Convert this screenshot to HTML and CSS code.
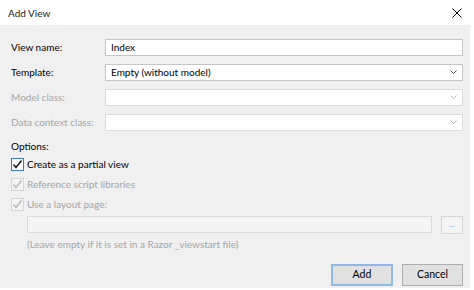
FILE: index.html
```html
<!DOCTYPE html>
<html lang="en">
<head>
  <meta charset="UTF-8" />
  <title>Add View</title>
  <link rel="stylesheet" href="styles.css">
</head>
<body>
  <div class="dialog">
    <div class="title-bar">
      <span class="title">Add View</span>
      <svg class="close-icon" width="10" height="10" viewBox="0 0 10 10">
        <path d="M0.5 0.5 L9.5 9.5 M9.5 0.5 L0.5 9.5" stroke="#000" stroke-width="1" fill="none" />
      </svg>
    </div>

    <div class="content">
      <div class="fields">
        <label class="field-label">View name:</label>
        <div class="box">Index</div>

        <label class="field-label">Template:</label>
        <div class="box select">Empty (without model)
          <svg class="arrow" width="7" height="5" viewBox="0 0 7 5"><path d="M0.5 0.5 L3.5 3.5 L6.5 0.5" stroke="#555" fill="none" /></svg>
        </div>

        <label class="field-label disabled">Model class:</label>
        <div class="box select off">
          <svg class="arrow" width="7" height="5" viewBox="0 0 7 5"><path d="M0.5 0.5 L3.5 3.5 L6.5 0.5" stroke="#b5b5b5" fill="none" /></svg>
        </div>

        <label class="field-label disabled">Data context class:</label>
        <div class="box select off">
          <svg class="arrow" width="7" height="5" viewBox="0 0 7 5"><path d="M0.5 0.5 L3.5 3.5 L6.5 0.5" stroke="#b5b5b5" fill="none" /></svg>
        </div>
      </div>

      <div class="options-label">Options:</div>

      <div class="check-row">
        <span class="checkbox checked">
          <svg width="11" height="11" viewBox="0 0 11 11"><path d="M1.5 5.5 L4 8.5 L9.5 1.5" stroke="#1e1e1e" stroke-width="1.6" fill="none" /></svg>
        </span>
        <span>Create as a partial view</span>
      </div>
      <div class="check-row disabled">
        <span class="checkbox off">
          <svg width="11" height="11" viewBox="0 0 11 11"><path d="M1.5 5.5 L4 8.5 L9.5 1.5" stroke="#bcbcbc" stroke-width="1.6" fill="none" /></svg>
        </span>
        <span>Reference script libraries</span>
      </div>
      <div class="check-row disabled">
        <span class="checkbox off">
          <svg width="11" height="11" viewBox="0 0 11 11"><path d="M1.5 5.5 L4 8.5 L9.5 1.5" stroke="#bcbcbc" stroke-width="1.6" fill="none" /></svg>
        </span>
        <span>Use a layout page:</span>
      </div>

      <div class="layout-row">
        <div class="box layout-input off"></div>
        <div class="browse-button">...</div>
      </div>
      <div class="hint">(Leave empty if it is set in a Razor _viewstart file)</div>

      <div class="buttons">
        <div class="button default">Add</div>
        <div class="button">Cancel</div>
      </div>
    </div>
  </div>
</body>
</html>
```

FILE: styles.css
```css
* {
  box-sizing: border-box;
}

body {
  margin: 0;
  background-color: white;
  font-family: Lato, "Noto Sans", sans-serif;
  font-size: 10px;
  color: #000;
}

.dialog {
  width: 470px;
  height: 288px;
  background-color: #f0f0f0;
  display: flex;
  flex-direction: column;
}

.title-bar {
  height: 25px;
  background-color: white;
  display: flex;
  align-items: center;
  justify-content: space-between;
  padding: 0 8px 0 8px;
}

.title {
  color: #1a1a1a;
}

.content {
  padding: 14px 7px 0 11px;
  display: flex;
  flex-direction: column;
}

/* Campos superiores */
.fields {
  display: grid;
  grid-template-columns: 94px 1fr;
  grid-auto-rows: 17px;
  row-gap: 8px;
  align-items: center;
}

.field-label {
  line-height: 17px;
  white-space: nowrap;
}

.disabled {
  color: #a6a6a6;
}

.box {
  height: 17px;
  background-color: white;
  border: 1px solid #c6c6c6;
  padding: 0 5px;
  line-height: 15px;
  position: relative;
}

.box.off {
  border-color: #dcdcdc;
}

.select .arrow {
  position: absolute;
  right: 5px;
  top: 5px;
}

.options-label {
  margin-top: 7px;
  line-height: 16px;
}

/* Checkboxes */
.check-row {
  height: 20px;
  display: flex;
  align-items: center;
  gap: 3px;
}

.checkbox {
  width: 13px;
  height: 13px;
  border: 1px solid #333;
  background-color: white;
  display: flex;
  align-items: center;
  justify-content: center;
}

.checkbox.checked {
  border-color: #3d7ab8;
}

.checkbox.off {
  border-color: #d5d5d5;
  background-color: #f4f4f4;
}

.layout-row {
  margin: 2px 0 0 16px;
  display: flex;
  gap: 9px;
  align-items: flex-start;
}

.layout-input {
  flex: 1;
  background-color: #f5f5f5;
  border-color: #e0e0e0;
}

.browse-button {
  width: 22px;
  height: 18px;
  border: 1px solid #d5d5d5;
  background-color: #f4f4f4;
  color: #a0a0a0;
  font-size: 8px;
  text-align: center;
  line-height: 14px;
}

.hint {
  margin: 2px 0 0 16px;
  line-height: 16px;
  color: #a6a6a6;
}

/* Botones */
.buttons {
  margin-top: 12px;
  display: flex;
  justify-content: flex-end;
  gap: 9px;
}

.button {
  width: 61px;
  height: 22px;
  border: 1px solid #adadad;
  background-color: #e1e1e1;
  text-align: center;
  line-height: 19px;
  font-size: 10.5px;
}

.button.default {
  width: 62px;
  border: 2px solid #8dbbe9;
  line-height: 17px;
}
```
